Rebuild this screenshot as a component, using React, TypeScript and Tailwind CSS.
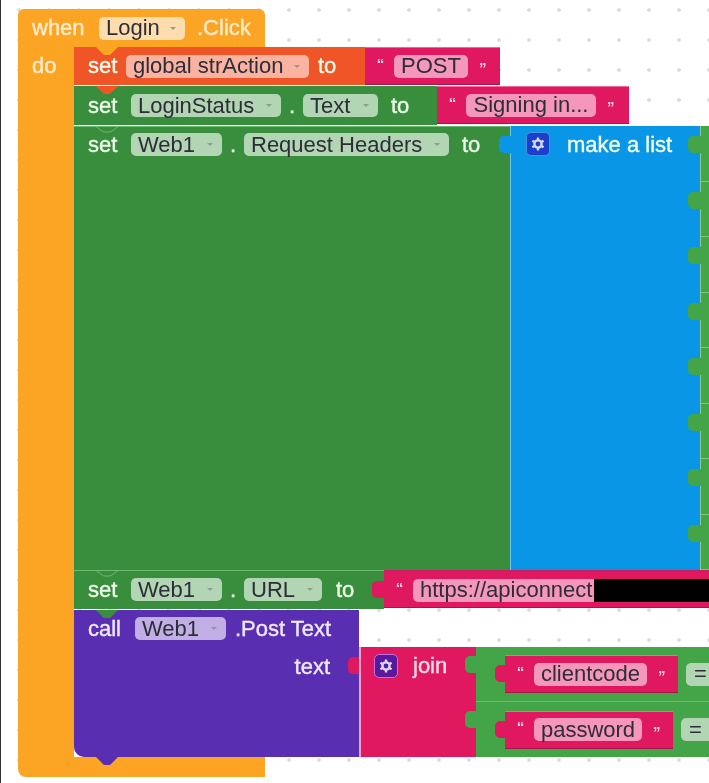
import React from "react";

type Tone = "orange" | "red" | "green" | "pink" | "purple";

const fieldTone: Record<Tone, string> = {
  orange: "bg-[#fddcae]",
  red: "bg-[#f9b3a0]",
  green: "bg-[#b2d5b4]",
  pink: "bg-[#f596bb]",
  purple: "bg-[#c0aee4]",
};

function Field({ label, w, tone }: { label: string; w: number; tone: Tone }) {
  return (
    <div
      className={`flex h-[23px] shrink-0 items-center justify-between rounded-[5px] pl-[7px] pr-[9px] text-[#2d2d38] ${fieldTone[tone]}`}
      style={{ width: w }}
    >
      <span className="whitespace-nowrap">{label}</span>
      <span className="ml-1 h-0 w-0 shrink-0 border-x-[3.5px] border-t-[3.5px] border-x-transparent border-t-[#8f9a90]" />
    </div>
  );
}

function Plain({ label, w, tone }: { label: string; w: number; tone: Tone }) {
  return (
    <div
      className={`flex h-[23px] shrink-0 items-center justify-center rounded-[5px] text-[#2d2d38] ${fieldTone[tone]}`}
      style={{ width: w }}
    >
      <span className="whitespace-nowrap">{label}</span>
    </div>
  );
}

function Word({ children, className = "" }: { children: React.ReactNode; className?: string }) {
  return (
    <span className={`shrink-0 whitespace-nowrap text-[#edfbe9] [-webkit-text-stroke:0.4px] ${className}`}>{children}</span>
  );
}

function Socket({ color, className = "" }: { color: string; className?: string }) {
  return <div className={`absolute h-[17px] rounded-l-[5px] ${color} ${className}`} />;
}

function Notch({ fill, className = "" }: { fill: string; className?: string }) {
  return (
    <svg className={`absolute h-[8px] w-[22px] ${className}`} viewBox="0 0 22 8">
      <path d="M0 0 H22 L16 6 Q15 8 13 8 H9 Q7 8 6 6 Z" fill={fill} />
    </svg>
  );
}

function NotchLine({ className = "" }: { className?: string }) {
  return (
    <svg className={`absolute h-[7px] w-[22px] ${className}`} viewBox="0 0 22 7">
      <path d="M0 0.5 L6 5 Q7 6 9 6 H13 Q15 6 16 5 L22 0.5" fill="none" stroke="#6fb873" strokeWidth="1" />
    </svg>
  );
}

function Gear({ bg, ring }: { bg: string; ring: string }) {
  return (
    <div className={`flex h-[24px] w-[24px] shrink-0 items-center justify-center rounded-[5px] border ${bg} ${ring}`}>
      <svg width="16" height="16" viewBox="0 0 16 16">
        <circle cx="8" cy="8" r="3.6" fill="none" stroke="#d6d8ff" strokeWidth="2.4" />
        <g stroke="#d6d8ff" strokeWidth="2.4">
          <path d="M8 1.5V4M8 12v2.5M2.4 4.7l2.2 1.3M11.4 10l2.2 1.3M2.4 11.3L4.6 10M11.4 6l2.2-1.3" />
        </g>
      </svg>
    </div>
  );
}

function Quote({ children }: { children: React.ReactNode }) {
  return <span className="pb-[6px] text-[15px] font-bold leading-none text-[#fbd0df]">{children}</span>;
}

function StringBlock({ label, fieldW, w }: { label: string; fieldW: number; w: number }) {
  return (
    <div
      className="relative flex h-[38px] shrink-0 items-center bg-[#e0185f] shadow-[inset_0_1px_0_#f06a98,inset_0_-1px_0_#a8144a]"
      style={{ width: w }}
    >
      <Socket color="bg-[#e0185f]" className="-left-[10px] top-[10px] w-[10px]" />
      <span className="flex w-[29px] shrink-0 justify-center pl-[2px]">
        <Quote>“</Quote>
      </span>
      <Plain label={label} w={fieldW} tone="pink" />
      <span className="pl-[11px]">
        <Quote>”</Quote>
      </span>
    </div>
  );
}

function PairRow({ label, stringW, fieldW, last = false }: { label: string; stringW: number; fieldW: number; last?: boolean }) {
  return (
    <div className={`relative flex h-[55px] w-[233px] items-center gap-[8px] pl-[29px] ${last ? "" : "border-b border-[#6dbd72]"}`}>
      <Socket color="bg-[#43a548]" className="-left-[11px] top-[9px] w-[11px]" />
      <StringBlock label={label} fieldW={fieldW} w={stringW} />
      <div className="flex h-[23px] w-[40px] shrink-0 items-center rounded-[5px] bg-[#b2d5b4] pl-[8px] text-[#2d2d38]">=</div>
    </div>
  );
}

export default function App() {
  return (
    <div
      className="relative h-[783px] w-[709px] overflow-hidden border-l border-[#333] bg-white bg-[radial-gradient(circle,#dcdcdc_1.5px,transparent_2.2px)] bg-[size:30px_30px] bg-[position:3px_-5px] pl-[17px] pt-[9px] text-[22px] leading-none blur-[0.5px]"
      style={{ fontFamily: '"Liberation Sans", Arial, sans-serif' }}
    >
      <div className="flex w-[247px] flex-col">
        {/* when header */}
        <div className="flex h-[38px] w-[247px] items-center rounded-t-[6px] bg-[#fca524] pl-[14px]">
          <Word className="w-[67px] text-[#fdeccb]">when</Word>
          <Field label="Login" w={86} tone="orange" />
          <Word className="ml-[12px] text-[#fdeccb]">.Click</Word>
        </div>

        <div className="flex">
          {/* do column */}
          <div className="w-[56px] shrink-0 bg-[#fca524] pl-[14px] pt-[8px]">
            <Word className="text-[#fdeccb]">do</Word>
          </div>

          {/* statements */}
          <div className="flex w-[635px] shrink-0 flex-col">
            {/* set global */}
            <div className="flex h-[39px]">
              <div className="relative z-10 flex h-[38px] w-[291px] shrink-0 items-center bg-[#ef5527] pl-[14px]">
                <Notch fill="#fca524" className="left-[22px] top-0" />
                <Word className="w-[38px]">set</Word>
                <Field label="global strAction" w={183} tone="red" />
                <Word className="ml-[9px]">to</Word>
              </div>
              <StringBlock label="POST" fieldW={74} w={135} />
            </div>

            {/* set LoginStatus */}
            <div className="flex h-[40px]">
              <div className="relative z-10 flex h-[39px] w-[363px] shrink-0 items-center bg-[#388e3c] pl-[14px]">
                <Notch fill="#ef5527" className="left-[22px] top-0" />
                <Word className="w-[43px]">set</Word>
                <Field label="LoginStatus" w={150} tone="green" />
                <Word className="w-[22px] pl-[8px]">.</Word>
                <Field label="Text" w={75} tone="green" />
                <Word className="ml-[13px]">to</Word>
              </div>
              <StringBlock label="Signing in..." fieldW={130} w={192} />
            </div>

            {/* set Web1.Request Headers */}
            <div className="flex h-[444px]">
              <div className="relative flex h-full w-[436px] shrink-0 items-start bg-[#388e3c] pl-[14px] pt-[7px]">
                <div className="absolute left-0 right-0 top-0 h-px bg-[#6fb873]" />
                <NotchLine className="left-[22px] top-0" />
                <Word className="w-[43px] pt-[1px]">set</Word>
                <Field label="Web1" w={91} tone="green" />
                <Word className="w-[22px] pl-[8px] pt-[1px]">.</Word>
                <Field label="Request Headers" w={205} tone="green" />
                <Word className="ml-[13px] pt-[1px]">to</Word>
              </div>
              <div className="relative z-10 flex h-full w-[190px] shrink-0 items-start border-l border-[#6fc3f2] bg-[#0a96e6] pl-[15px] pt-[6px]">
                <Socket color="bg-[#0a96e6]" className="-left-[12px] top-[10px] w-[12px]" />
                <Gear bg="bg-[#1a3fc8]" ring="border-[#4f8fe8]" />
                <Word className="ml-[17px] pt-[2px]">make a list</Word>
              </div>
              <div className="flex h-full flex-1 flex-col border-l border-[#8ccc90]">
                {[0, 1, 2, 3, 4, 5, 6, 7].map((i) => (
                  <div key={i} className="relative h-[55.5px] border-b border-[#7cc480] bg-[#43a548]">
                    <Socket color="bg-[#43a548]" className="-left-[13px] top-[10px] z-20 w-[14px]" />
                  </div>
                ))}
              </div>
            </div>

            {/* set Web1.URL */}
            <div className="flex h-[40px]">
              <div className="relative flex h-[39px] w-[310px] shrink-0 items-center bg-[#388e3c] pl-[14px]">
                <div className="absolute left-0 right-0 top-0 h-px bg-[#6fb873]" />
                <NotchLine className="left-[22px] top-0" />
                <Word className="w-[43px]">set</Word>
                <Field label="Web1" w={91} tone="green" />
                <Word className="w-[22px] pl-[8px]">.</Word>
                <Field label="URL" w={78} tone="green" />
                <Word className="ml-[14px]">to</Word>
              </div>
              <div className="relative flex h-[38px] w-[325px] shrink-0 items-center border-t-2 border-[#c82060] bg-[#e0185f] shadow-[inset_0_-1px_0_#a8144a]">
                <Socket color="bg-[#e0185f]" className="-left-[12px] top-[9px] w-[12px]" />
                <span className="flex w-[29px] shrink-0 justify-center pl-[2px]">
                  <Quote>“</Quote>
                </span>
                <div className="flex h-[23px] flex-1 items-center overflow-hidden rounded-l-[5px] bg-[#f596bb] pl-[7px] text-[#2d2d38]">
                  <span className="w-[174px] shrink-0">https://apiconnect</span>
                  <div className="h-full flex-1 bg-black" />
                </div>
              </div>
            </div>

            {/* call Web1.Post Text */}
            <div className="flex h-[147px]">
              <div className="relative h-full w-[285px] shrink-0 rounded-bl-[10px] bg-[#5a2eb0]">
                <Notch fill="#388e3c" className="left-[22px] top-0" />
                <Notch fill="#5a2eb0" className="bottom-[-8px] left-[22px]" />
                <div className="flex items-center pl-[14px] pt-[7px]">
                  <Word className="w-[47px] text-[#eee8fa]">call</Word>
                  <Field label="Web1" w={91} tone="purple" />
                  <Word className="ml-[9px] text-[#eee8fa]">.Post Text</Word>
                </div>
                <div className="flex justify-end pr-[29px] pt-[16px]">
                  <Word className="text-[#eee8fa]">text</Word>
                </div>
              </div>
              <div className="relative flex h-[110px] self-end">
                <div className="relative flex h-full w-[117px] shrink-0 items-start border-l-2 border-[#f3a0c0] bg-[#e0185f] pl-[13px] pt-[7px]">
                  <Socket color="bg-[#e0185f]" className="-left-[13px] top-[10px] w-[11px]" />
                  <Gear bg="bg-[#5a189a]" ring="border-[#c070e0]" />
                  <Word className="ml-[15px] pt-[1px] text-[#fcd9e6]">join</Word>
                </div>
                <div className="flex h-full flex-col bg-[#43a548]">
                  <PairRow label="clientcode" stringW={173} fieldW={113} />
                  <PairRow label="password" stringW={168} fieldW={108} last />
                </div>
              </div>
            </div>
          </div>
        </div>

        {/* bottom of the when block */}
        <div className="h-[20px] w-[247px] rounded-bl-[8px] bg-[#fca524]" />
      </div>
    </div>
  );
}
